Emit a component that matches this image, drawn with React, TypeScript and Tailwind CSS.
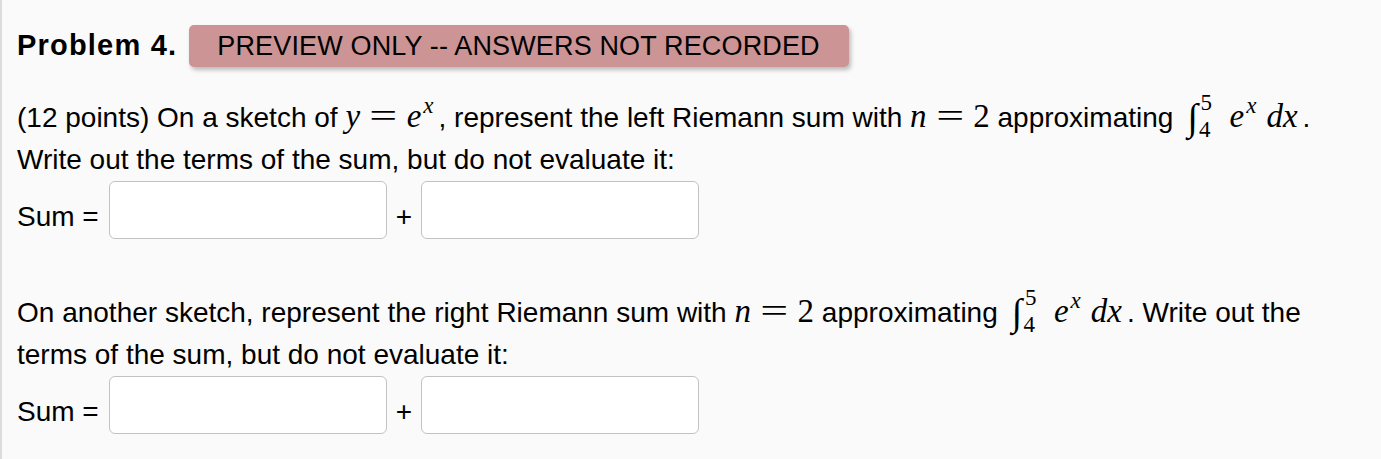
import type { ReactNode } from 'react';

const sans = "font-['Liberation_Sans',Arial,sans-serif]";
const serif = "font-['Liberation_Serif','Times_New_Roman',serif]";

function V({ children }: { children: ReactNode }) {
  return <span className={`${serif} italic text-[33px] leading-none`}>{children}</span>;
}

function Eq() {
  return (
    <span className={`${serif} inline-block scale-x-150 text-[33px] leading-none mx-[14px]`}>=</span>
  );
}

function ExpX() {
  return (
    <>
      <V>e</V>
      <span className={`${serif} italic text-[23px] leading-none relative -top-[14px] ml-[2px]`}>x</span>
    </>
  );
}

function Integral() {
  return (
    <>
      <span className={`${serif} italic text-[38px] leading-[28px] relative top-[3px] ml-[6px]`}>∫</span>
      <span className={`${serif} text-[23px] leading-none relative -top-[17px] ml-[3px]`}>5</span>
      <span className={`${serif} text-[23px] leading-none relative top-[10px] -ml-[13px]`}>4</span>
      <span className="inline-block w-[19px]" />
      <ExpX />
      <span className="inline-block w-[10px]" />
      <V>dx</V>
      <span className="inline-block w-[5px]" />
    </>
  );
}

function SumRow() {
  return (
    <div className="flex items-end h-[58px]">
      <span className="mb-[8px] leading-[28px]">Sum =</span>
      <input
        type="text"
        className="ml-[10px] w-[278px] h-[58px] bg-white border border-[#c2c2c2] rounded-[6px] outline-none"
      />
      <span className="mb-[8px] leading-[28px] px-[9px]">+</span>
      <input
        type="text"
        className="w-[278px] h-[58px] bg-white border border-[#c2c2c2] rounded-[6px] outline-none"
      />
    </div>
  );
}

export default function App() {
  return (
    <div className={`${sans} min-h-screen bg-[#fafafa] border-l-2 border-[#dcdcdc] pl-[15px] text-black text-[28px]`}>
      {/* Header */}
      <div className="pt-[24px] flex items-center">
        <span className="text-[29px] font-bold tracking-[1.2px]">Problem 4.</span>
        <div className="ml-[12px] h-[42px] flex items-center pl-[28px] pr-[29px] bg-[#cc9494] rounded-[5px] shadow-[2px_3px_4px_rgba(0,0,0,0.25)]">
          <span className="text-[27px] tracking-[0.15px]">PREVIEW ONLY -- ANSWERS NOT RECORDED</span>
        </div>
      </div>

      {/* Part 1 */}
      <div className="mt-[29px] leading-[42px] whitespace-nowrap">
        (12 points) On a sketch of <V>y</V>
        <Eq />
        <ExpX />
        <span className="ml-[5px]">, represent the left Riemann sum with </span>
        <V>n</V>
        <Eq />
        <span className={`${serif} text-[33px] leading-none`}>2</span> approximating <Integral />.
        <br />
        Write out the terms of the sum, but do not evaluate it:
      </div>
      <SumRow />

      {/* Part 2 */}
      <div className="mt-[53px] leading-[42px] whitespace-nowrap">
        On another sketch, represent the right Riemann sum with <V>n</V>
        <Eq />
        <span className={`${serif} text-[33px] leading-none`}>2</span> approximating <Integral />. Write out the
        <br />
        terms of the sum, but do not evaluate it:
      </div>
      <SumRow />
    </div>
  );
}
